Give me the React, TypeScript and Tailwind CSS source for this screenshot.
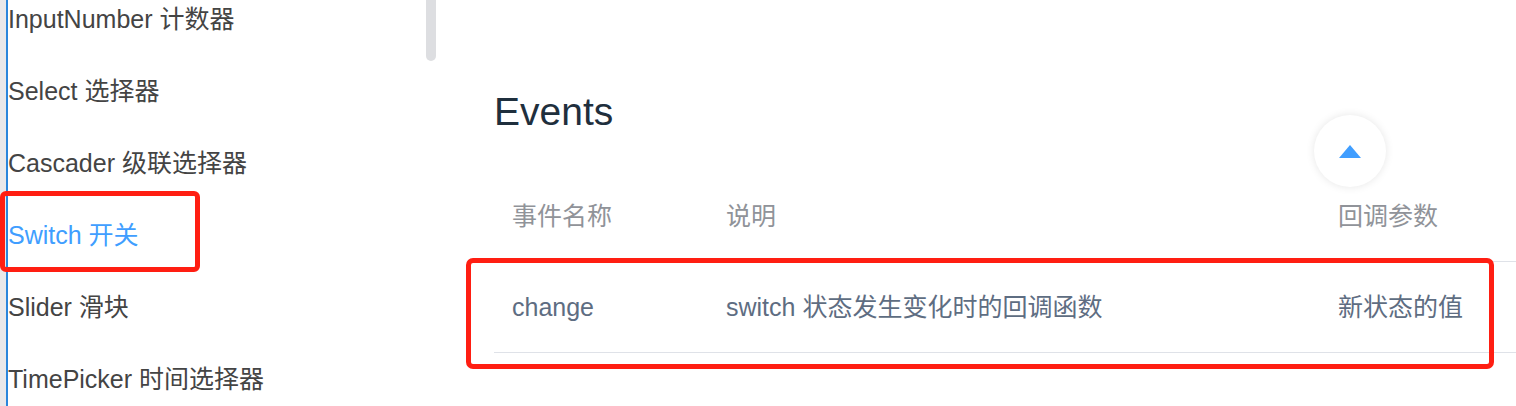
import React from "react";

const font = { fontFamily: '"Liberation Sans", Arial, "Noto Sans CJK SC", sans-serif' };

const navItems = [
  { label: "InputNumber 计数器" },
  { label: "Select 选择器" },
  { label: "Cascader 级联选择器" },
  { label: "Switch 开关", active: true },
  { label: "Slider 滑块" },
  { label: "TimePicker 时间选择器" },
];

export default function App() {
  return (
    <div
      className="relative w-[1516px] h-[406px] overflow-hidden bg-white flex"
      style={font}
    >
      {/* left edge strip */}
      <div className="w-[6px] h-full bg-[#e8e8ea] shrink-0" />
      <div className="w-[2px] h-full bg-[#2a86dc] shrink-0" />

      {/* sidebar */}
      <div className="relative w-[432px] shrink-0">
        <ul className="-mt-[17px] flex flex-col">
          {navItems.map((it) => (
            <li
              key={it.label}
              className={
                "h-[72px] leading-[72px] text-[25px] whitespace-nowrap " +
                (it.active ? "text-[#409eff]" : "text-[#444444]")
              }
            >
              {it.label}
            </li>
          ))}
        </ul>
        {/* scrollbar thumb */}
        <div className="absolute left-[418px] top-0 w-[10px] h-[61px] bg-[#dddee1] rounded-b-[5px]" />
      </div>

      {/* main */}
      <div className="flex-1 pl-[54px] pt-[88px] min-w-0">
        <h2 className="text-[39px] leading-[48px] text-[#1f2f3d] font-normal">Events</h2>
        <div className="mt-[36px] w-[1100px]">
          <div className="flex h-[90px] items-center border-b border-[#dfe2e8] text-[25px] text-[#909399]">
            <div className="w-[232px] pl-[18px]">事件名称</div>
            <div className="w-[612px]">说明</div>
            <div className="flex-1">回调参数</div>
          </div>
          <div className="flex h-[91px] items-center pt-[2px] border-b border-[#dfe2e8] text-[25px] text-[#5e6d82]">
            <div className="w-[232px] pl-[18px]">change</div>
            <div className="w-[612px]">switch 状态发生变化时的回调函数</div>
            <div className="flex-1">新状态的值</div>
          </div>
        </div>
      </div>

      {/* back to top button */}
      <div className="absolute left-[1314px] top-[115px] w-[72px] h-[72px] rounded-full bg-white shadow-[0_0_8px_rgba(0,0,0,0.10)] flex items-center justify-center">
        <svg width="22" height="13" viewBox="0 0 22 13">
          <polygon points="11,0 22,13 0,13" fill="#409eff" />
        </svg>
      </div>

      {/* red annotation boxes */}
      <div className="absolute left-0 top-[191px] w-[200px] h-[81px] border-[5px] border-[#ff1e12] rounded-[6px]" />
      <div className="absolute left-[466px] top-[258px] w-[1028px] h-[111px] border-[5px] border-[#ff1e12] rounded-[7px]" />
    </div>
  );
}
